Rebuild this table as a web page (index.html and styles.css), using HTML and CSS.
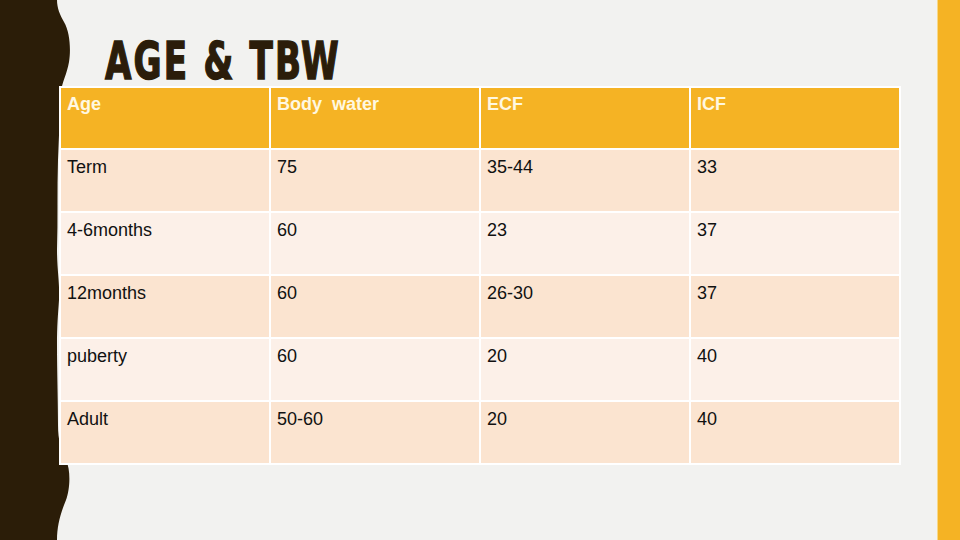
FILE: index.html
```html
<!DOCTYPE html>
<html lang="en">
<head>
<meta charset="utf-8">
<title>AGE &amp; TBW</title>
<link rel="stylesheet" href="styles.css">
</head>
<body>
<div class="slide">
  <svg class="band" width="80" height="540" viewBox="0 0 80 540" aria-hidden="true">
    <path fill="#2b1d08" d="M0 0 H57 C57 8 60 15 64 22 C70 32 71 50 69 62 C67 74 62 82 61 92 C60 110 59 135 58 160 C57 190 58 220 57 250 C57 270 60 285 59 300 C58 315 57 325 57 345 C57 370 58 400 58 425 C58 440 61 450 66 460 C71 470 70 490 66 500 C61 512 57 525 57 540 H0 Z"/>
  </svg>
  <div class="accent"></div>
  <main class="content">
    <h1 class="title"><span>AGE &amp; TBW</span></h1>
    <table class="grid">
      <thead>
        <tr><th>Age</th><th>Body&nbsp; water</th><th>ECF</th><th>ICF</th></tr>
      </thead>
      <tbody>
        <tr class="odd"><td>Term</td><td>75</td><td>35-44</td><td>33</td></tr>
        <tr class="even"><td>4-6months</td><td>60</td><td>23</td><td>37</td></tr>
        <tr class="odd"><td>12months</td><td>60</td><td>26-30</td><td>37</td></tr>
        <tr class="even"><td>puberty</td><td>60</td><td>20</td><td>40</td></tr>
        <tr class="odd"><td>Adult</td><td>50-60</td><td>20</td><td>40</td></tr>
      </tbody>
    </table>
  </main>
</div>
</body>
</html>
```

FILE: styles.css
```css
html, body {
  margin: 0;
  padding: 0;
}
body {
  background: #f2f2f0;
  font-family: "Liberation Sans", Arial, sans-serif;
}
.slide {
  position: relative;
  width: 960px;
  height: 540px;
  overflow: hidden;
  background: #f2f2f0;
}
.band {
  position: absolute;
  left: 0;
  top: 0;
}
.accent {
  position: absolute;
  right: 0;
  top: 0;
  width: 22px;
  height: 540px;
  background: #f5b324;
  border-left: 1px solid #f7d889;
}
.content {
  position: relative;
  padding: 0 0 0 59px;
}
.title {
  margin: 0;
  height: 86px;
  padding-left: 46px;
  box-sizing: border-box;
  padding-top: 35px;
  font-family: "DejaVu Sans Condensed", "DejaVu Sans", sans-serif;
  font-stretch: condensed;
  font-weight: bold;
  font-size: 52px;
  line-height: 1;
  color: #2b1d0a;
  letter-spacing: 3px;
  -webkit-text-stroke: 1.4px #2b1d0a;
}
.title span {
  display: inline-block;
  transform: scaleX(0.73);
  transform-origin: left center;
  white-space: nowrap;
}
.grid {
  border-collapse: separate;
  border-spacing: 2px;
  background: #ffffff;
  width: 842px;
  table-layout: fixed;
}
.grid th, .grid td {
  height: 61px;
  box-sizing: border-box;
  padding: 7px 7px 0 6px;
  vertical-align: top;
  text-align: left;
  font-size: 18px;
}
.grid th {
  background: #f5b324;
  color: #fff8e1;
  font-weight: bold;
  height: 60px;
  padding-top: 6px;
}
.grid td {
  color: #111111;
  font-weight: normal;
}
.grid tr.odd td {
  background: #fbe4d0;
}
.grid tr.even td {
  background: #fcf0e8;
}
```
